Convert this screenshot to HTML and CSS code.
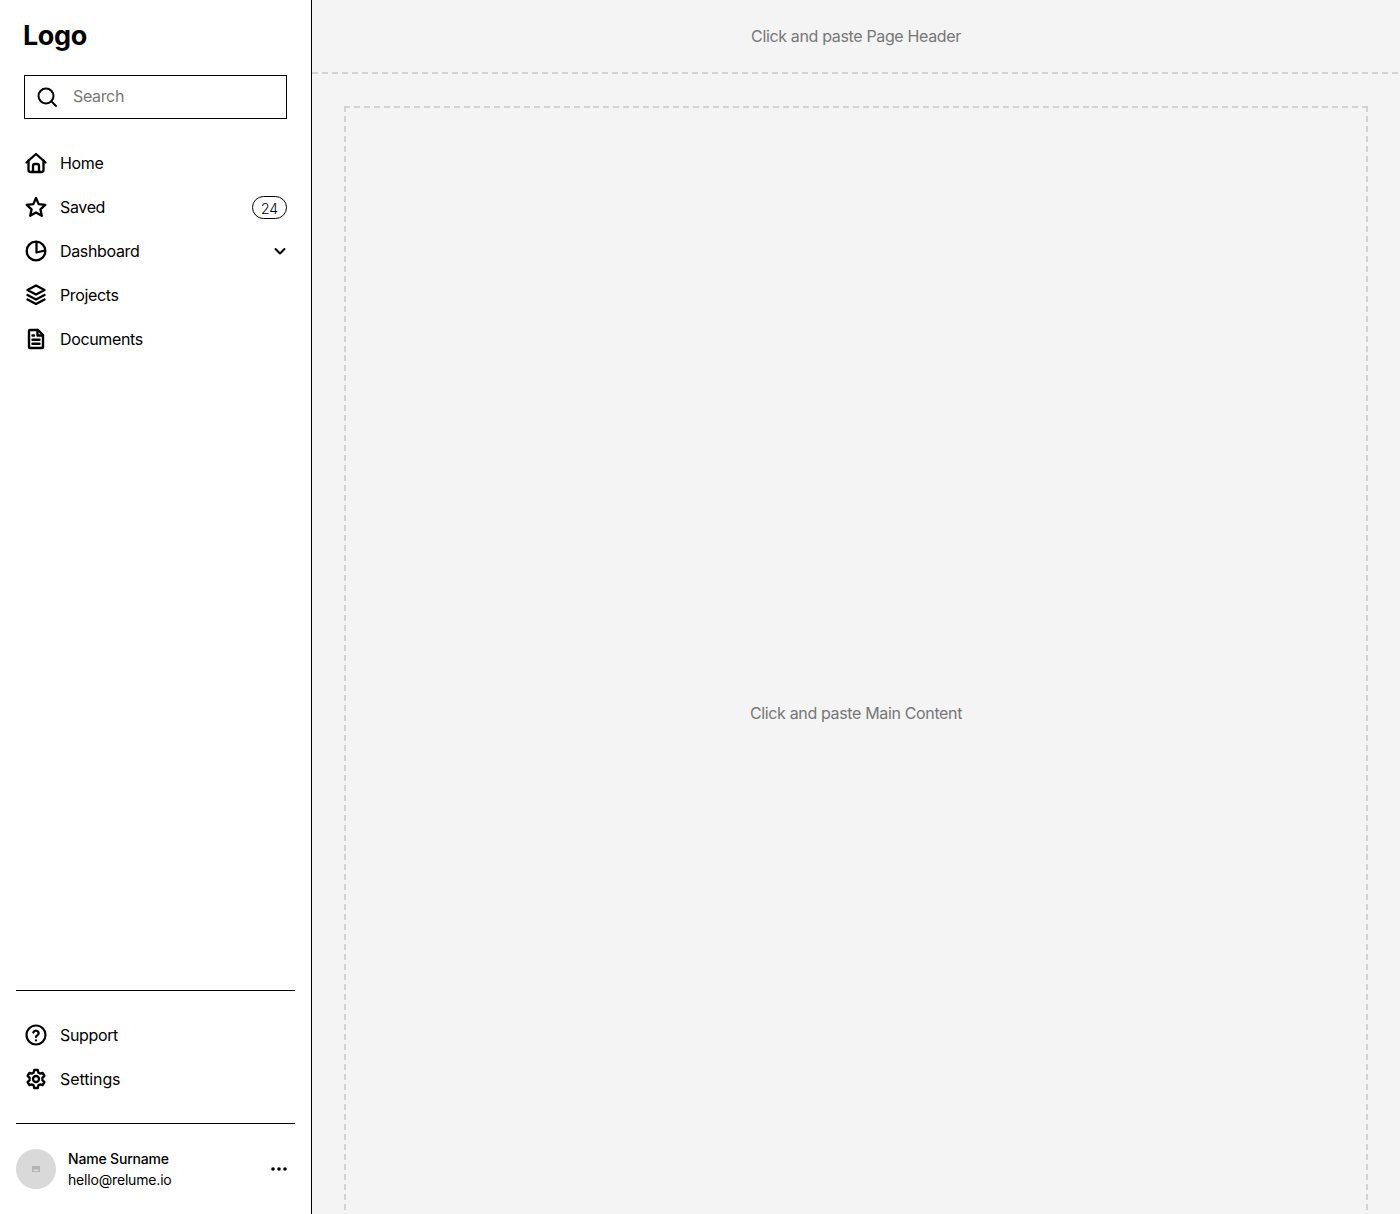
FILE: index.html
```html
<!DOCTYPE html>
<html lang="en">
<head>
<meta charset="utf-8">
<title>Sidebar layout</title>
<link rel="stylesheet" href="styles.css">
</head>
<body>
<div class="shell">
  <aside class="sidebar">
    <div class="top">
      <div class="logo">Logo</div>
      <div class="search">
        <svg class="icon" viewBox="0 0 24 24" fill="none" stroke="#000" stroke-width="2" stroke-linecap="round" stroke-linejoin="round"><circle cx="11" cy="11" r="7.500"/><path d="M21 21l-4.600-4.600"/></svg>
        <span class="search-text">Search</span>
      </div>
      <nav class="nav">
        <a class="item">
          <svg class="icon" viewBox="0 0 24 24" fill="none" stroke="#000" stroke-width="2.300" stroke-linejoin="round" stroke-linecap="round"><path d="M2.500 11.500L12 3l9.500 8.500"/><path d="M4.500 9.500V19a2 2 0 0 0 2 2h11a2 2 0 0 0 2-2V9.500"/><path d="M9 21v-6a2 2 0 0 1 2-2h2a2 2 0 0 1 2 2v6"/></svg>
          <span class="label">Home</span>
        </a>
        <a class="item">
          <svg class="icon" viewBox="0 0 24 24" fill="none" stroke="#000" stroke-width="2.300" stroke-linejoin="round"><path d="M12 3l2.700 6.100 6.600.7-4.900 4.500 1.400 6.500L12 17.500l-5.800 3.300 1.400-6.500-4.900-4.500 6.600-.7z"/></svg>
          <span class="label">Saved</span>
          <span class="badge">24</span>
        </a>
        <a class="item">
          <svg class="icon" viewBox="0 0 24 24" fill="none" stroke="#000" stroke-width="2.300" stroke-linejoin="round" stroke-linecap="round"><circle cx="12" cy="12" r="9.300"/><path d="M12.500 3v10.500l8.500-2"/></svg>
          <span class="label">Dashboard</span>
          <svg class="chevron" viewBox="0 0 16 16" fill="none" stroke="#000" stroke-width="2" stroke-linecap="round" stroke-linejoin="round"><path d="M4.500 6l4.500 4.500L13.500 6"/></svg>
        </a>
        <a class="item">
          <svg class="icon" viewBox="0 0 24 24" fill="none" stroke="#000" stroke-width="2.400" stroke-linejoin="round" stroke-linecap="round"><path d="M12 2.500l8.500 4.500-8.500 4.500L3.500 7z"/><path d="M3.500 12l8.500 4.500 8.500-4.500"/><path d="M3.500 16.500l8.500 4.500 8.500-4.500"/></svg>
          <span class="label">Projects</span>
        </a>
        <a class="item">
          <svg class="icon" viewBox="0 0 24 24" fill="none" stroke="#000" stroke-width="2.400" stroke-linejoin="round" stroke-linecap="round"><path d="M5 4a1 1 0 0 1 1-1h8l5 5v12a1 1 0 0 1-1 1H6a1 1 0 0 1-1-1z"/><path d="M13.500 3v5.500H19"/><path d="M8.500 8.500h1.500M8.500 12.800h7M8.500 16.800h7"/></svg>
          <span class="label">Documents</span>
        </a>
      </nav>
    </div>
    <div class="bottom">
      <div class="rule"></div>
      <nav class="nav-small">
        <a class="item">
          <svg class="icon" viewBox="0 0 24 24" fill="none" stroke="#000" stroke-width="2.200" stroke-linecap="round" stroke-linejoin="round"><circle cx="12" cy="12" r="9.500"/><path d="M9.300 9.500a2.800 2.800 0 0 1 5.400.8c0 1.800-2.700 2.300-2.700 3.700"/><path d="M12 17.300v.1"/></svg>
          <span class="label">Support</span>
        </a>
        <a class="item">
          <svg class="icon" viewBox="0 0 24 24" fill="none" stroke="#000" stroke-width="2.300" stroke-linejoin="round"><circle cx="12" cy="12" r="3"/><path d="M10.200 3h3.600l.6 2.700 1.600.9 2.600-.8 1.800 3.100-2 1.900v2.400l2 1.900-1.800 3.100-2.600-.8-1.600.9-.6 2.700h-3.600l-.6-2.700-1.600-.9-2.600.8-1.800-3.100 2-1.900v-2.400l-2-1.900 1.800-3.100 2.600.8 1.600-.9z"/></svg>
          <span class="label label-wide">Settings</span>
        </a>
      </nav>
      <div class="rule"></div>
      <div class="user">
        <div class="avatar">
          <svg class="avatar-icon" viewBox="0 0 8 6"><rect width="8" height="6" fill="#b4b4b4"/><path d="M1 5l2-2 1 1 1-1 2 2z" fill="#dcdcdc"/></svg>
        </div>
        <div class="user-text">
          <div class="user-name">Name Surname</div>
          <div class="user-mail">hello@relume.io</div>
        </div>
        <svg class="dots" viewBox="0 0 16 4" fill="#000"><circle cx="2" cy="2" r="1.800"/><circle cx="8" cy="2" r="1.800"/><circle cx="14" cy="2" r="1.800"/></svg>
      </div>
    </div>
  </aside>
  <div class="content">
    <header class="page-header">Click and paste Page Header</header>
    <main class="main">
      <div class="slot">Click and paste Main Content</div>
    </main>
  </div>
</div>
</body>
</html>
```
FILE: styles.css
```css
* { box-sizing: border-box; }
html, body { margin: 0; height: 1214px; overflow: hidden; }
body { font-family: Inter, "Liberation Sans", sans-serif; font-size: 16px; line-height: 24px; letter-spacing: -0.35px; color: #000; background: #fff; }
.shell { display: flex; height: 1214px; overflow: hidden; }
.sidebar { width: 312px; flex: none; display: flex; flex-direction: column; justify-content: space-between; padding: 0 16px; border-right: 1px solid #000; background: #fff; }
.logo { margin: 18px 0 0 7px; font-size: 27px; line-height: 36px; font-weight: 700; letter-spacing: -0.4px; }
.search { display: flex; align-items: center; gap: 14px; margin: 21px 8px 0 8px; width: 263px; height: 44px; padding: 0 10px; border: 1px solid #000; }
.search-text { color: #777; padding-bottom: 2px; }
.icon { width: 24px; height: 24px; flex: none; }
.nav { margin-top: 22px; }
.item { display: flex; align-items: center; gap: 12px; height: 44px; padding: 0 8px; }
.label { flex: 1; }
.label-wide { letter-spacing: -0.1px; }
.badge { width: 35px; height: 23px; margin-top: 1px; border: 1px solid #000; border-radius: 12px; font-size: 14px; line-height: 23px; letter-spacing: 0; font-weight: 300; text-align: center; }
.chevron { width: 16px; height: 16px; flex: none; }
.rule { height: 1px; background: #000; width: 279px; }
.nav-small { padding: 22px 0; }
.user { display: flex; align-items: center; gap: 12px; padding: 24px 0; }
.avatar { width: 40px; height: 40px; border-radius: 50%; background: #d9d9d9; display: flex; align-items: center; justify-content: center; flex: none; }
.avatar-icon { width: 8px; height: 6px; }
.user-text { flex: 1; font-size: 14px; line-height: 21px; letter-spacing: -0.18px; }
.user-name { font-weight: 500; }
.dots { width: 16px; height: 4px; margin-right: 8px; flex: none; }
.content { flex: 1; min-width: 0; background: #f4f4f4; }
.page-header {
  height: 74px; padding-bottom: 2px; display: flex; align-items: center; justify-content: center; color: #777;
  background: repeating-linear-gradient(90deg, #d3d3d3 0 6px, transparent 6px 10px) left bottom / 100% 2px no-repeat;
}
.main { padding: 32px; }
.slot {
  height: 1214px; display: flex; align-items: center; justify-content: center; color: #777;
  background:
    repeating-linear-gradient(90deg, #d3d3d3 0 6px, transparent 6px 9.98px) left top / 100% 2px no-repeat,
    repeating-linear-gradient(90deg, #d3d3d3 0 6px, transparent 6px 9.98px) left bottom / 100% 2px no-repeat,
    repeating-linear-gradient(180deg, #d3d3d3 0 6px, transparent 6px 9.98px) left top / 2px 100% no-repeat,
    repeating-linear-gradient(180deg, #d3d3d3 0 6px, transparent 6px 9.98px) right top / 2px 100% no-repeat;
}
```
